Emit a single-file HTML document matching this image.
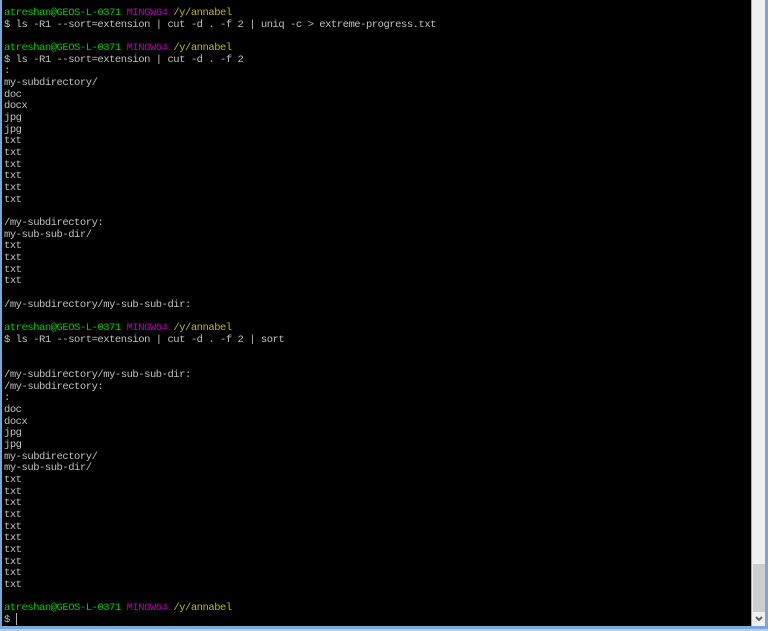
<!DOCTYPE html>
<html>
<head>
<meta charset="utf-8">
<style>
html,body{margin:0;padding:0;background:#c3c9d3;width:768px;height:631px;overflow:hidden}
#blue{position:absolute;left:0;top:0;width:768px;height:629px;background:#7aa7d3}
#term{position:absolute;left:2px;top:0;width:749px;height:626px;background:#000;overflow:hidden}
#txt{position:absolute;left:2px;top:8px;margin:0;font:10.5px/11.673px "Liberation Mono",monospace;letter-spacing:-.463px;color:#c0c0c0;white-space:pre;filter:blur(.3px)}
.g{color:#10c410}.m{color:#b800b8}.y{color:#bcbc00}
#cur{position:absolute;left:14px;top:613px;width:1px;height:12px;background:#b0b0b0}
#sb{position:absolute;left:751px;top:0;width:14px;height:626px;background:#f0f0f0;border-left:1px solid #a8a8a8;box-sizing:border-box}
#th{position:absolute;left:1px;top:564px;width:12px;height:48px;background:#cdcdcd}
#ar{position:absolute;left:3px;top:616px}
</style>
</head>
<body>
<div id="blue"></div>
<div id="term">
<pre id="txt"><span class="g">atreshan@GEOS-L-0371</span> <span class="m">MINGW64</span> <span class="y">/y/annabel</span>
$ ls -R1 --sort=extension | cut -d . -f 2 | uniq -c &gt; extreme-progress.txt

<span class="g">atreshan@GEOS-L-0371</span> <span class="m">MINGW64</span> <span class="y">/y/annabel</span>
$ ls -R1 --sort=extension | cut -d . -f 2
:
my-subdirectory/
doc
docx
jpg
jpg
txt
txt
txt
txt
txt
txt

/my-subdirectory:
my-sub-sub-dir/
txt
txt
txt
txt

/my-subdirectory/my-sub-sub-dir:

<span class="g">atreshan@GEOS-L-0371</span> <span class="m">MINGW64</span> <span class="y">/y/annabel</span>
$ ls -R1 --sort=extension | cut -d . -f 2 | sort


/my-subdirectory/my-sub-sub-dir:
/my-subdirectory:
:
doc
docx
jpg
jpg
my-subdirectory/
my-sub-sub-dir/
txt
txt
txt
txt
txt
txt
txt
txt
txt
txt

<span class="g">atreshan@GEOS-L-0371</span> <span class="m">MINGW64</span> <span class="y">/y/annabel</span>
$</pre>
<div id="cur"></div>
</div>
<div id="sb">
<div id="th"></div>
<svg id="ar" width="8" height="6" viewBox="0 0 8 6"><path d="M1 1L4 4L7 1" fill="none" stroke="#606060" stroke-width="2"/></svg>
</div>
</body>
</html>
